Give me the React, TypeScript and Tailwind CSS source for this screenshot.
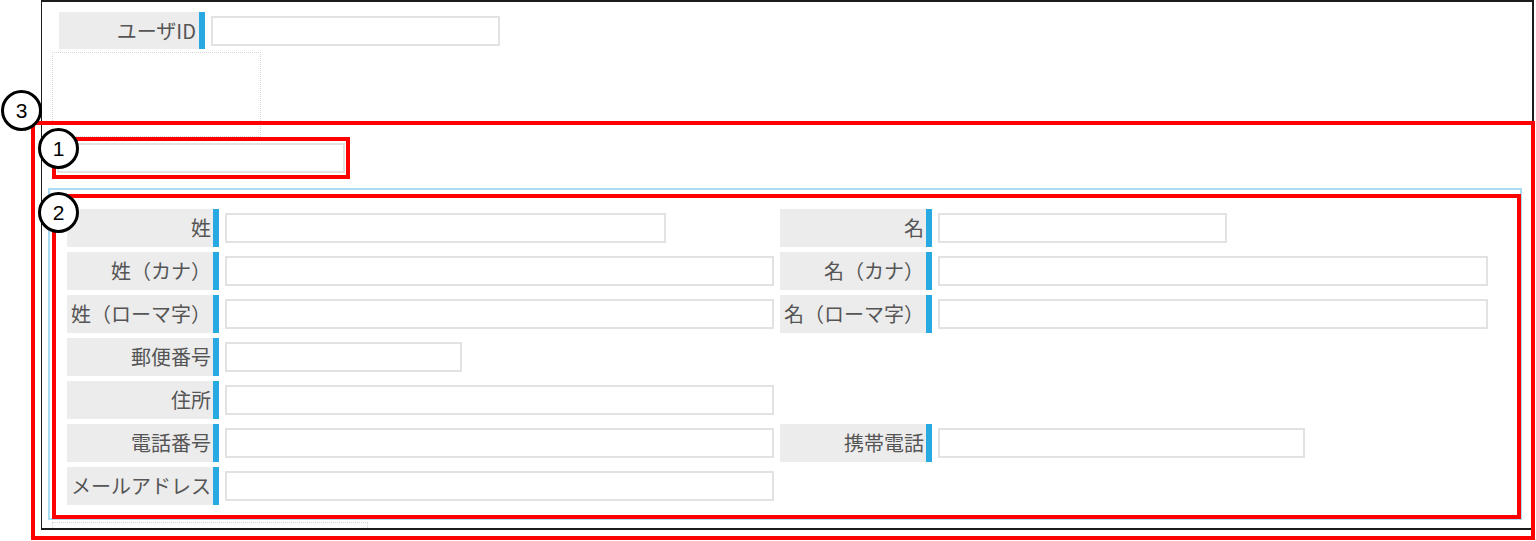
type Field = { label: string; inputWidth: string };

const ROWS: [Field, Field | null][] = [
  [{ label: "姓", inputWidth: "w-[441px]" }, { label: "名", inputWidth: "w-[289px]" }],
  [{ label: "姓（カナ）", inputWidth: "w-[549px]" }, { label: "名（カナ）", inputWidth: "w-[550px]" }],
  [{ label: "姓（ローマ字）", inputWidth: "w-[549px]" }, { label: "名（ローマ字）", inputWidth: "w-[550px]" }],
  [{ label: "郵便番号", inputWidth: "w-[237px]" }, null],
  [{ label: "住所", inputWidth: "w-[549px]" }, null],
  [{ label: "電話番号", inputWidth: "w-[549px]" }, { label: "携帯電話", inputWidth: "w-[367px]" }],
  [{ label: "メールアドレス", inputWidth: "w-[549px]" }, null],
];

const Cell = ({ field }: { field: Field | null }) => (
  <div className="flex w-[713px] items-center">
    {field && (
      <>
        <div className="flex h-[38px] w-[146px] items-center justify-end whitespace-nowrap bg-[#ececec] pr-[2px] text-[20px] text-[#555555]">
          {field.label}
        </div>
        <div className="h-[38px] w-[6px] bg-[#29a9e1]" />
        <div className={`ml-[6px] h-[30px] border-2 border-[#e2e2e2] bg-white ${field.inputWidth}`} />
      </>
    )}
  </div>
);

const Marker = ({ n, className }: { n: string; className: string }) => (
  <div
    className={`absolute flex h-[41px] w-[41px] items-center justify-center rounded-full border-[3.5px] border-black bg-white font-['Liberation_Sans',sans-serif] text-[21px] text-black ${className}`}
  >
    {n}
  </div>
);

export default function App() {
  return (
    <div className="relative h-[541px] w-[1536px] overflow-hidden bg-white font-['Noto_Sans_CJK_JP','Noto_Sans',sans-serif]">
      {/* page frame */}
      <div className="ml-[41px] flex h-[530px] w-[1493px] flex-col overflow-hidden border-t-2 border-r-2 border-b-2 border-l border-[#1c1c1c]">
        <div className="mt-[10px] ml-[17px] flex shrink-0 items-center">
          <div className="flex h-[37px] w-[140px] items-center justify-end bg-[#ececec] pr-[3px] text-[20px] text-[#555555]">
            ユーザID
          </div>
          <div className="h-[37px] w-[6px] bg-[#29a9e1]" />
          <div className="ml-[6px] h-[30px] w-[289px] border-2 border-[#e2e2e2]" />
        </div>

        <div className="mt-[3px] ml-[10px] h-[85px] w-[209px] shrink-0 border border-dotted border-[#d6d6d6]" />
        <div className="mt-[6px] ml-[15px] h-[30px] w-[288px] shrink-0 border-2 border-[#e2e2e2]" />

        <div className="mt-[15px] ml-[6px] flex h-[332px] w-[1474px] shrink-0 flex-col gap-[5px] border-2 border-[#aadcf3] pt-[19px] pl-[17px]">
          {ROWS.map(([left, right]) => (
            <div key={left.label} className="flex">
              <Cell field={left} />
              <Cell field={right} />
            </div>
          ))}
        </div>

        <div className="mt-[2px] ml-[10px] h-[20px] w-[316px] shrink-0 border border-dotted border-[#d6d6d6]" />
      </div>

      {/* annotation overlays */}
      <div className="absolute top-[121px] left-[31px] h-[419px] w-[1504px] border-4 border-[#ff0000]" />
      <div className="absolute top-[137px] left-[52px] h-[42px] w-[298px] border-4 border-[#ff0000]" />
      <div className="absolute top-[194px] left-[52px] h-[325px] w-[1469px] border-4 border-[#ff0000]" />
      <Marker n="3" className="top-[90px] left-[1px]" />
      <Marker n="1" className="top-[128px] left-[38px]" />
      <Marker n="2" className="top-[192px] left-[38px]" />
    </div>
  );
}
